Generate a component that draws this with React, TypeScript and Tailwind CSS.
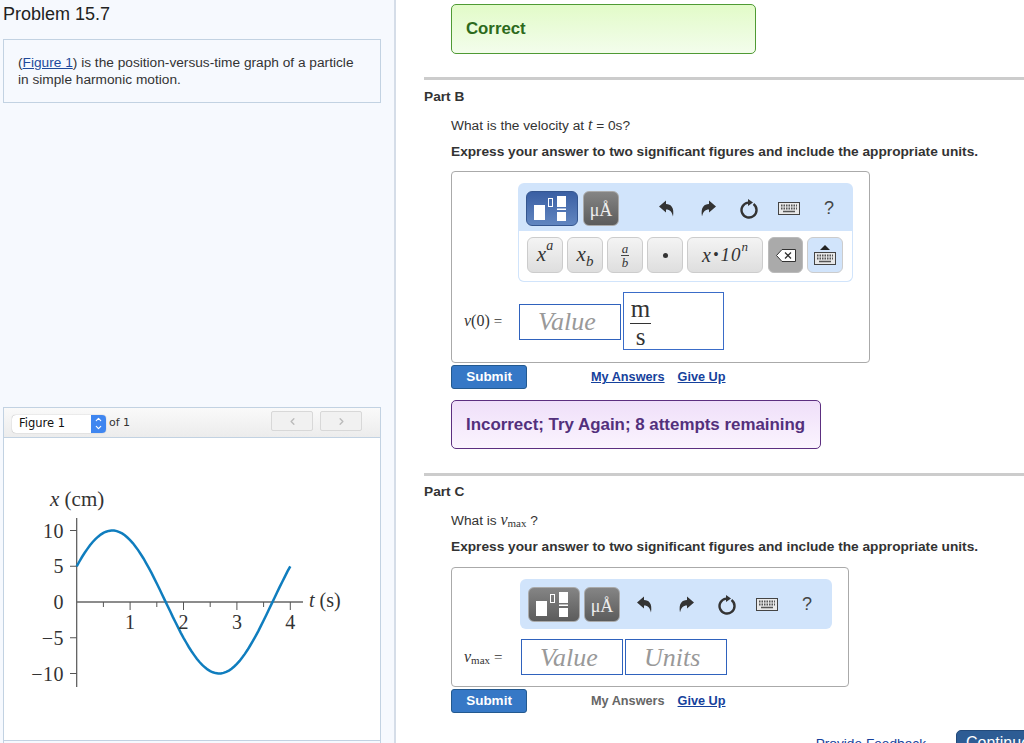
import React from 'react'
import { ChevronLeft, ChevronRight, ChevronUp, ChevronDown } from 'lucide-react'

const serif = 'font-["Liberation_Serif",serif]'

const KeyboardIcon = () => (
  <svg width="22" height="13" viewBox="0 0 22 13">
    <rect x="0.5" y="0.5" width="21" height="12" fill="#e8e8e8" stroke="#444" />
    <path d="M3 3.5h16M3 6.5h16" stroke="#555" strokeWidth="2" strokeDasharray="1.5 1" />
    <path d="M5 9.5h12" stroke="#555" strokeWidth="1.5" />
  </svg>
)

const TemplateIcon = () => (
  <svg width="32" height="25" viewBox="0 0 32 25" className="mr-[5px]">
    <rect x="0" y="9" width="11" height="15" fill="#fff" />
    <rect x="14.5" y="2.5" width="4" height="8" fill="none" stroke="#fff" />
    <rect x="23" y="0" width="9" height="11" fill="#fff" />
    <rect x="23" y="12.5" width="9" height="1.5" fill="#fff" />
    <rect x="23" y="16" width="9" height="9" fill="#fff" />
  </svg>
)

const UndoIcon: React.FC<{ flip?: boolean }> = ({ flip }) => (
  <svg width="16" height="17" viewBox="0 0 16 17" className={flip ? '-scale-x-100' : ''}>
    <path d="M0 6.5L7 0.5V4C12 4 15.5 7.5 14 16.5C13 12 11 9.5 7 9.5V12.5Z" fill="#333" />
  </svg>
)

const RefreshIcon = () => (
  <svg width="20" height="20" viewBox="0 0 20 20">
    <path d="M14.5 5A7.5 7.5 0 1 1 9 3.6" fill="none" stroke="#333" strokeWidth="2.4" />
    <path d="M9 0L14 3.5L9 7Z" fill="#333" />
  </svg>
)

const Toolbar: React.FC<{ active?: boolean }> = ({ active }) => (
  <div className="flex items-start h-[48px] pl-[8px] pt-[8px]">
    <div
      className={`w-[52px] h-[35px] rounded-md border flex items-center justify-center ${
        active
          ? 'bg-gradient-to-b from-[#3a5fa3] to-[#6286c0] border-[#35568f]'
          : 'bg-gradient-to-b from-[#858585] to-[#5c5c5c] border-[#aaa]'
      }`}
    >
      <TemplateIcon />
    </div>
    <div className={`w-[36px] h-[35px] rounded-md border border-[#aaa] bg-gradient-to-b from-[#858585] to-[#5c5c5c] flex items-center justify-center ${active ? 'ml-[5px]' : 'ml-[4px]'}`}>
      <span className={`${serif} text-[#eee] text-[18px] leading-none mt-[2px]`}>μÅ</span>
    </div>
    <div className={`flex items-center h-[35px] ${active ? 'ml-[28px]' : 'ml-[5px]'}`}>
      <div className="w-[40px] flex justify-center"><UndoIcon /></div>
      <div className="w-[41px] flex justify-center"><UndoIcon flip /></div>
      <div className="w-[41px] flex justify-center"><RefreshIcon /></div>
      <div className="w-[40px] flex justify-center"><KeyboardIcon /></div>
      <div className="w-[40px] flex justify-center text-[18px] text-[#444]">?</div>
    </div>
  </div>
)

const KeyBtn: React.FC<{ w: string; children: React.ReactNode }> = ({ w, children }) => (
  <div className={`${w} h-[36px] rounded-md border border-[#ccc] bg-gradient-to-b from-[#f4f4f4] to-[#dedede] flex items-center justify-center ${serif} italic text-[#333]`}>
    {children}
  </div>
)

const FormulaRow = () => (
  <div className="flex gap-1 h-[51px] pt-[6px] pl-[8px] bg-white border-x border-b border-[#d1e4fb] rounded-b-md">
    <KeyBtn w="w-[36px]"><span className="text-[21px]">x</span><sup className="text-[14px] -mt-1">a</sup></KeyBtn>
    <KeyBtn w="w-[36px]"><span className="text-[21px]">x</span><sub className="text-[15px] mt-1">b</sub></KeyBtn>
    <KeyBtn w="w-[36px]">
      <div className="flex flex-col items-center text-[13px] leading-[13px]">
        <span className="border-b border-[#444] px-[1px]">a</span>
        <span>b</span>
      </div>
    </KeyBtn>
    <KeyBtn w="w-[36px]"><span className="w-[5px] h-[5px] rounded-full bg-[#333]" /></KeyBtn>
    <KeyBtn w="w-[76px]"><span className="text-[20px]">x</span><span className="mx-[2px]">•</span><span className="text-[19px] tracking-[1px]">10</span><sup className="text-[13px] -mt-1">n</sup></KeyBtn>
    <div className="w-[35px] h-[36px] ml-[1px] rounded-md border border-[#bbb] bg-[#aaa] flex items-center justify-center">
      <svg width="20" height="13" viewBox="0 0 20 13">
        <path d="M6 0.5h13.5v12H6L0.5 6.5z" fill="#fff" stroke="#333" />
        <path d="M9 3.5l6 6M15 3.5l-6 6" stroke="#333" strokeWidth="1.3" />
      </svg>
    </div>
    <div className="w-[36px] h-[36px] rounded-md border border-[#ccc] bg-[#d1e4fb] flex flex-col items-center justify-center gap-[2px]">
      <div className="w-0 h-0 border-x-[5px] border-x-transparent border-b-[5px] border-b-[#222]" />
      <KeyboardIcon />
    </div>
  </div>
)

const Graph = () => {
  const X = (t: number) => 72.7 + 53.4 * t
  const Y = (v: number) => 164 - 7.15 * v
  const pts: string[] = []
  for (let t = 0; t <= 4.001; t += 0.05) {
    pts.push(`${X(t).toFixed(1)},${Y(10 * Math.sin((Math.PI * t) / 2 + Math.PI / 6)).toFixed(1)}`)
  }
  const numCls = 'fill-[#333] text-[20px]'
  const yLabels: [string, number][] = [['10', 10], ['5', 5], ['0', 0], ['−5', -5], ['−10', -10]]
  return (
    <svg width="376" height="302" className={serif}>
      <line x1="72.7" y1="80" x2="72.7" y2="249" stroke="#555" strokeWidth="1.2" />
      <line x1="72.7" y1="164" x2="299" y2="164" stroke="#666" strokeWidth="1.5" />
      {[10, 5, -5, -10].map((v) => (
        <line key={v} x1="66" x2="72.7" y1={Y(v)} y2={Y(v)} stroke="#555" />
      ))}
      {[0.5, 1, 1.5, 2, 2.5, 3, 3.5, 4].map((t) => (
        <line key={t} x1={X(t)} x2={X(t)} y1="164" y2={t % 1 === 0 ? 172 : 169} stroke="#555" />
      ))}
      <polyline points={pts.join(' ')} fill="none" stroke="#0f7dbe" strokeWidth="2.5" />
      {yLabels.map(([s, v]) => (
        <text key={s} x="60" y={Y(v) + 7} textAnchor="end" className={numCls} letterSpacing="0.5">{s}</text>
      ))}
      {[1, 2, 3, 4].map((t) => (
        <text key={t} x={X(t)} y="191" textAnchor="middle" className={numCls}>{t}</text>
      ))}
      <text x="46" y="68" className="fill-[#333] text-[21px]">
        <tspan fontStyle="italic">x</tspan> (cm)
      </text>
      <text x="305" y="169" className={numCls}>
        <tspan fontStyle="italic">t</tspan> (s)
      </text>
    </svg>
  )
}

const Rule = () => <div className="h-[3px] bg-[#ccc]" />

const App: React.FC = () => {
  return (
    <div className='flex h-[743px] w-[1024px] overflow-hidden font-["Liberation_Sans",sans-serif] bg-white text-[#333]'>
      {/* left panel */}
      <div className="w-[396px] shrink-0 h-full bg-[#f6f9fe] border-r-2 border-[#d5dde8] pl-[3px]">
        <h1 className="text-[18px] leading-[21px] pt-[4px] text-[#222]">Problem 15.7</h1>
        <div className="mt-[14px] w-[378px] h-[64px] border border-[#c2d2e2] pt-[14px] pl-[14px] text-[13.7px] leading-[17px]">
          (<a className="text-[#1e4a9c] underline">Figure 1</a>) is the position-versus-time graph of a particle
          <br />
          in simple harmonic motion.
        </div>
        <div className="mt-[304px] w-[378px] border border-[#c2d2e2] bg-white">
          <div className="h-[30px] border-b border-[#c2d2e2] bg-gradient-to-b from-[#fafafa] to-[#ececec] flex items-center pl-[8px] relative">
            <div className='w-[94px] h-[18px] mt-[2px] bg-white rounded-[4px] shadow-[0_0_1px_#888] flex items-center justify-between font-["DejaVu_Sans",sans-serif] text-[11.5px] text-[#111] pl-[7px]'>
              Figure 1
              <div className="w-[15px] h-[18px] bg-[#3f86f0] rounded-r-[4px] flex flex-col items-center justify-center text-white">
                <ChevronUp size={9} strokeWidth={3} className="-mb-[1px]" />
                <ChevronDown size={9} strokeWidth={3} />
              </div>
            </div>
            <span className='ml-[3px] mt-[2px] font-["DejaVu_Sans",sans-serif] text-[11px]'>of 1</span>
            <div className="ml-auto mr-[18px] flex gap-[7px] -mt-[3px]">
              <div className="w-[42px] h-[20px] border border-[#d8d8d8] rounded-[2px] bg-[#f1f1f1] flex items-center justify-center text-[#bbb]"><ChevronLeft size={11} strokeWidth={3} /></div>
              <div className="w-[42px] h-[20px] border border-[#d8d8d8] rounded-[2px] bg-[#f1f1f1] flex items-center justify-center text-[#bbb]"><ChevronRight size={11} strokeWidth={3} /></div>
            </div>
          </div>
          <Graph />
          <div className="border-t border-[#c2d2e2] h-[10px] bg-[#f6f9fe]" />
        </div>
      </div>

      {/* right panel */}
      <div className="flex-1 pl-[28px] pt-[4px] min-w-0">
        <div className="ml-[27px] w-[305px] h-[50px] rounded-[5px] border border-[#4f9a34] bg-gradient-to-b from-[#e2fbc8] to-[#f3fdec] flex items-center pl-[14px] text-[16.8px] font-bold text-[#2c6a1c]">
          Correct
        </div>
        <div className="mt-[23px]"><Rule /></div>
        <div className="mt-[9px] text-[13.7px] leading-[15px] font-bold">Part B</div>
        <div className="ml-[27px]">
          <p className="mt-[13px] h-[15px] text-[13.7px] leading-[15px]">
            What is the velocity at <i className={`${serif} text-[16px]`}>t</i> = 0s?
          </p>
          <p className="mt-[12px] text-[13.7px] leading-[15px] font-bold">Express your answer to two significant figures and include the appropriate units.</p>

          <div className="mt-[12px] w-[419px] h-[192px] border border-[#aaa] rounded-[4px] pt-[11px] pl-[66px]">
            <div className="w-[335px] rounded-md bg-[#d1e4fb] overflow-hidden">
              <Toolbar active />
              <FormulaRow />
            </div>
            <div className="flex items-center mt-[10px] -ml-[54px]">
              <span className={`w-[55px] ${serif} text-[16px]`}><i>v</i>(0) <span className="text-[15px]">=</span></span>
              <div className={`w-[102px] h-[36px] border border-[#2f62bd] flex items-center pl-[18px] ${serif} italic text-[26px] text-[#999] mt-[1px]`}>Value</div>
              <div className={`ml-[2px] w-[101px] h-[58px] border border-[#3a6cc8] pl-[6px] pt-[3px] ${serif} text-[25px] leading-[25px]`}>
                <div className="w-[21px] border-b border-[#333] text-center pb-[2px]">m</div>
                <div className="w-[21px] text-center">s</div>
              </div>
            </div>
          </div>

          <div className="flex items-center mt-[2px]">
            <div className="w-[76px] h-[24px] pt-[1px] rounded-[3px] bg-[#3678c6] border border-[#23598f] text-white text-[13.5px] font-bold flex items-center justify-center">Submit</div>
            <a className="ml-[64px] mt-[2px] text-[12.7px] font-bold text-[#15419c] underline">My Answers</a>
            <a className="ml-[13px] mt-[2px] text-[12.7px] font-bold text-[#15419c] underline">Give Up</a>
          </div>

          <div className="mt-[11px] w-[370px] h-[49px] rounded-[5px] border border-[#5c2f80] bg-gradient-to-b from-[#efdff9] to-[#fbf4fe] flex items-center pl-[14px] text-[16.9px] font-bold text-[#53307c]">
            Incorrect; Try Again; 8 attempts remaining
          </div>
        </div>

        <div className="mt-[24px]"><Rule /></div>
        <div className="mt-[8px] text-[13.7px] leading-[15px] font-bold">Part C</div>
        <div className="ml-[27px]">
          <p className="mt-[13px] h-[15px] text-[13.7px] leading-[15px]">
            What is <i className={`${serif} text-[16px]`}>v</i><span className={`${serif} text-[11px] relative top-[2px]`}>max</span> ?
          </p>
          <p className="mt-[12px] text-[13.7px] leading-[15px] font-bold">Express your answer to two significant figures and include the appropriate units.</p>

          <div className="mt-[13px] w-[398px] h-[120px] border border-[#aaa] rounded-[4px] pt-[11px] pl-[68px]">
            <div className="w-[312px] h-[50px] rounded-md bg-[#d1e4fb] overflow-hidden">
              <Toolbar />
            </div>
            <div className="flex items-center mt-[10px] -ml-[56px]">
              <span className={`w-[57px] ${serif} text-[16px]`}><i>v</i><span className="text-[11px] relative top-[2px]">max</span> <span className="text-[15px]">=</span></span>
              <div className={`w-[102px] h-[36px] border border-[#2f62bd] flex items-center pl-[18px] ${serif} italic text-[26px] text-[#999]`}>Value</div>
              <div className={`ml-[2px] w-[102px] h-[36px] border border-[#2f62bd] flex items-center pl-[18px] ${serif} italic text-[26px] text-[#999]`}>Units</div>
            </div>
          </div>

          <div className="flex items-center mt-[2px]">
            <div className="w-[76px] h-[24px] pt-[1px] rounded-[3px] bg-[#3678c6] border border-[#23598f] text-white text-[13.5px] font-bold flex items-center justify-center">Submit</div>
            <span className="ml-[64px] mt-[2px] text-[12.7px] font-bold text-[#666]">My Answers</span>
            <a className="ml-[13px] mt-[2px] text-[12.7px] font-bold text-[#15419c] underline">Give Up</a>
          </div>

          <div className="flex justify-end items-start mt-[17px] -mr-[12px]">
            <a className="text-[13.7px] text-[#15419c] mt-[6px] mr-[30px] leading-[15px]">Provide Feedback</a>
            <div className="shrink-0 w-[80px] h-[24px] rounded-t-[5px] bg-[#2d5c94] border border-[#234a7a] text-white text-[16px] pl-[9px]">Continue</div>
          </div>
        </div>
      </div>
    </div>
  )
}

export default App
